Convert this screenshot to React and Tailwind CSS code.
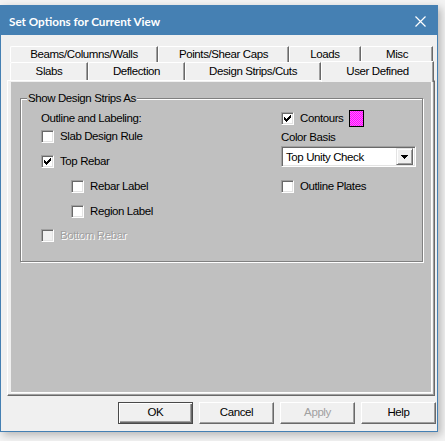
import React from "react";

const ui = { fontFamily: '"Liberation Sans", Arial, sans-serif' };

function Box({ checked, disabled }) {
  return (
    <span
      className={`w-[13px] h-[13px] shrink-0 flex items-center justify-center border border-t-[#a0a0a0] border-l-[#a0a0a0] border-r-white border-b-white shadow-[inset_1px_1px_0_#696969,inset_-1px_-1px_0_#e3e3e3] ${
        disabled ? "bg-[#f0f0f0]" : "bg-white"
      }`}
    >
      {checked && (
        <svg width="7" height="7" viewBox="0 0 7 7" shapeRendering="crispEdges">
          <path d="M0 2 L2 4 L7 -1 L7 2 L2 7 L0 5 Z" fill="#000" />
        </svg>
      )}
    </span>
  );
}

function Check({ label, checked, disabled, className = "" }) {
  return (
    <div className={`flex items-center h-[13px] ${className}`}>
      <Box checked={checked} disabled={disabled} />
      <span
        className={`ml-[6px] leading-[13px] ${
          disabled ? "text-[#a0a0a0] [text-shadow:1px_1px_0_#fff]" : "text-black"
        }`}
      >
        {label}
      </span>
    </div>
  );
}

function Tab({ w, h, selected, children }) {
  return (
    <div
      className={`${w} ${h} shrink-0 flex items-center justify-center bg-[#f0f0f0] border-t border-l border-r border-t-white border-l-white border-r-[#696969] rounded-tl-[2px] shadow-[inset_-1px_0_0_#a0a0a0] text-black ${
        selected ? "relative z-10 -mt-[1px] -mb-[2px] pb-[1px]" : ""
      }`}
    >
      {children}
    </div>
  );
}

function Button({ children, primary, disabled }) {
  return (
    <button
      className={`w-[75px] h-[22px] bg-[#f0f0f0] flex items-center justify-center ${
        primary
          ? "border border-[#4a4a4a] shadow-[inset_1px_1px_0_#fff,inset_-1px_-1px_0_#696969,inset_-2px_-2px_0_#a0a0a0]"
          : "border border-t-white border-l-white border-r-[#696969] border-b-[#696969] shadow-[inset_-1px_-1px_0_#a0a0a0]"
      } ${disabled ? "text-[#a0a0a0]" : "text-black"}`}
    >
      {children}
    </button>
  );
}

export default function App() {
  return (
    <div className="w-[445px] h-[441px] bg-[#f3f3f3] overflow-hidden text-[11.5px] tracking-[-0.4px]" style={ui}>
      <div className="mt-[5px] w-[438px] h-[427px] border border-[#4580b3] bg-[#f0f0f0] flex flex-col shadow-[3px_3px_8px_rgba(0,0,0,0.25)]">
        {/* title bar */}
        <div className="h-[29px] shrink-0 bg-[#4580b3] flex items-center justify-between pl-[8px] pr-[6px]">
          <span
            className="text-white font-bold text-[11.7px] tracking-normal mt-[2px]"
            style={{ fontFamily: "Lato, sans-serif" }}
          >
            Set Options for Current View
          </span>
          <svg width="11" height="11" viewBox="0 0 11 11" className="mr-[5px] mt-[2px]">
            <path d="M0.5 0.5 L10.5 10.5 M10.5 0.5 L0.5 10.5" stroke="#fff" strokeWidth="1.2" />
          </svg>
        </div>

        <div className="flex-1 flex flex-col pt-[11px] pb-[7px]">
          {/* back tab row */}
          <div className="flex ml-[9px]">
            <Tab w="w-[148px]" h="h-[16px]">Beams/Columns/Walls</Tab>
            <Tab w="w-[131px]" h="h-[16px]">Points/Shear Caps</Tab>
            <Tab w="w-[72px]" h="h-[16px]">Loads</Tab>
            <Tab w="w-[72px]" h="h-[16px]">Misc</Tab>
          </div>
          {/* front tab row */}
          <div className="flex ml-[9px] h-[18px]">
            <Tab w="w-[78px]" h="h-[18px]">Slabs</Tab>
            <Tab w="w-[97px]" h="h-[18px]">Deflection</Tab>
            <Tab w="w-[136px]" h="h-[18px]">Design Strips/Cuts</Tab>
            <Tab w="w-[113px]" h="h-[21px]" selected>
              User Defined
            </Tab>
          </div>

          {/* tab page */}
          <div className="ml-[6px] w-[428px] h-[316px] flex border-l border-t border-r border-b border-l-white border-t-white border-r-[#696969] border-b-[#696969] shadow-[inset_-1px_-1px_0_#a0a0a0] pl-[3px] pt-[1px] pr-[2px] pb-[2px]">
            <div className="flex-1 bg-[#c0c0c0] border-r border-b border-white">
              <fieldset className="ml-[9px] mt-[9px] w-[403px] h-[171px] border border-[#808080] shadow-[inset_1px_1px_0_#fff,1px_1px_0_#fff]">
                <legend className="ml-[6px] px-[1px] bg-[#c0c0c0] leading-[14px] text-black">Show Design Strips As</legend>
                <div className="flex pl-[20px] pt-[6px]">
                  <div className="w-[240px] flex flex-col">
                    <div className="h-[14px] leading-[14px]">Outline and Labeling:</div>
                    <div className="flex flex-col gap-[12px] mt-[5px]">
                      <Check label="Slab Design Rule" />
                      <Check label="Top Rebar" checked />
                      <Check label="Rebar Label" className="ml-[30px]" />
                      <Check label="Region Label" className="ml-[30px]" />
                      <Check label="Bottom Rebar" disabled className="-mt-[1px]" />
                    </div>
                  </div>
                  <div className="flex flex-col">
                    <div className="flex items-center h-[16px] -mt-[1px]">
                      <Check label="Contours" checked />
                      <span className="ml-[6px] w-[15px] h-[17px] border border-black bg-[repeating-conic-gradient(#ff00ff_0_25%,#ff70ff_0_50%)] bg-[length:2px_2px]" />
                    </div>
                    <div className="h-[14px] leading-[14px] mt-[4px]">Color Basis</div>
                    <div className="mt-[2px] w-[135px] h-[21px] flex items-center bg-white border border-t-[#a0a0a0] border-l-[#a0a0a0] border-r-white border-b-white shadow-[inset_1px_1px_0_#696969,inset_-1px_-1px_0_#e3e3e3] pl-[4px] pr-[2px]">
                      <span className="flex-1 leading-[14px]">Top Unity Check</span>
                      <span className="w-[17px] h-[17px] flex items-center justify-center bg-[#f0f0f0] border border-t-[#e3e3e3] border-l-[#e3e3e3] border-r-[#696969] border-b-[#696969] shadow-[inset_1px_1px_0_#fff,inset_-1px_-1px_0_#a0a0a0]">
                        <svg width="7" height="4" viewBox="0 0 7 4" shapeRendering="crispEdges">
                          <path d="M0 0 H7 L3.5 4 Z" fill="#000" />
                        </svg>
                      </span>
                    </div>
                    <Check label="Outline Plates" className="mt-[13px]" />
                  </div>
                </div>
              </fieldset>
            </div>
          </div>

          {/* buttons */}
          <div className="mt-[6px] flex justify-end gap-[6px] pr-[1px]">
            <Button primary>OK</Button>
            <Button>Cancel</Button>
            <Button disabled>Apply</Button>
            <Button>Help</Button>
          </div>
        </div>
      </div>
    </div>
  );
}
